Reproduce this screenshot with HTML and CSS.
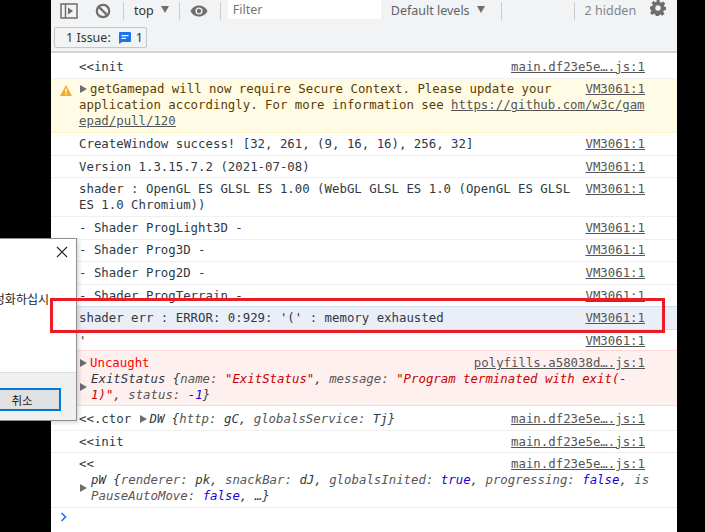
FILE: index.html
```html
<!DOCTYPE html>
<html lang="en">
<head>
  <meta charset="UTF-8" />
  <title>Console</title>
  <link rel="stylesheet" href="styles.css">
</head>
<body>
  <div class="panel">
    <div class="toolbar">
      <svg class="tool-icon sidebar-icon" width="18" height="16" viewBox="0 0 18 16"><path d="M1 1h16v14H1z M5.500 1v14" fill="none" stroke="#6e6e6e" stroke-width="1.500"/><path d="M8 4.500l5 3.500-5 3.500z" fill="#6e6e6e"/></svg>
      <svg class="tool-icon ban-icon" width="16" height="16" viewBox="0 0 16 16"><circle cx="8" cy="8" r="6.200" fill="none" stroke="#6e6e6e" stroke-width="2.200"/><path d="M3.600 3.600l8.800 8.800" stroke="#6e6e6e" stroke-width="2.200"/></svg>
      <span class="sep first-sep"></span>
      <span class="context">top</span>
      <span class="arrow"></span>
      <span class="sep context-sep"></span>
      <svg class="tool-icon eye-icon" width="18" height="12" viewBox="0 0 18 12"><path d="M9 0.500C5 0.500 1.800 3 0.500 6c1.300 3 4.500 5.500 8.500 5.500s7.200-2.500 8.500-5.500C16.200 3 13 0.500 9 0.500z" fill="#6e6e6e"/><circle cx="9" cy="6" r="3.600" fill="#f1f3f4"/><circle cx="9" cy="6" r="2.200" fill="#6e6e6e"/></svg>
      <span class="sep eye-sep"></span>
      <div class="filter">Filter</div>
      <span class="levels">Default levels</span>
      <span class="arrow"></span>
      <span class="sep levels-sep"></span>
      <span class="sep hidden-sep"></span>
      <span class="hidden-count">2 hidden</span>
      <svg class="gear-icon" width="16" height="16" viewBox="0 0 16 16"><path fill="#6e6e6e" fill-rule="evenodd" d="M6.500 0h3l.4 2.200 1.300.6L13.100 1.500l2.100 2.100-1.300 1.900.6 1.300 1.500.3v3l-2.200.4-.6 1.300 1.300 1.900-2.100 2.100-1.900-1.300-1.300.6-.4 1.500h-3l-.4-2.200-1.300-.6-1.900 1.300-2.100-2.100 1.300-1.900-.6-1.300L0 9.500v-3l2.200-.4.6-1.300L1.500 3l2.100-2.100 1.900 1.300 1.300-.6z M8 5.300a2.700 2.700 0 1 0 0 5.400 2.700 2.700 0 0 0 0-5.400z"/></svg>
    </div>
    <div class="issuebar">
      <button class="issue-button">
        1 Issue:
        <svg width="12" height="12" viewBox="0 0 12 12"><path d="M1 0h10a1 1 0 0 1 1 1v8a1 1 0 0 1-1 1H3l-3 2V1a1 1 0 0 1 1-1z" fill="#1a73e8"/><path d="M2.500 3h7v1.200h-7z M2.500 5.800h4.500V7h-4.500z" fill="#fff"/></svg>
        1
      </button>
    </div>

    <div class="messages">
      <div class="row"><a class="source">main.df23e5e….js:1</a>&lt;&lt;init</div>
      <div class="row warning">
        <svg class="warn-icon" width="12" height="11" viewBox="0 0 12 11"><path d="M6 0l6 11H0z" fill="#f2ab26"/><path d="M5.300 3.500h1.400v4H5.300z M5.300 8.300h1.400v1.300H5.300z" fill="#fff"/></svg>
        <a class="source">VM3061:1</a><span class="tri"></span>getGamepad will now require Secure Context. Please update your application accordingly. For more information see <a class="url">https://github.com/w3c/gam<wbr>epad/pull/120</a>
      </div>
      <div class="row"><a class="source">VM3061:1</a>CreateWindow success! [32, 261, (9, 16, 16), 256, 32]</div>
      <div class="row"><a class="source">VM3061:1</a>Version 1.3.15.7.2 (2021-07-08)</div>
      <div class="row"><a class="source">VM3061:1</a>shader : OpenGL ES GLSL ES 1.00 (WebGL GLSL ES 1.0 (OpenGL ES GLSL ES 1.0 Chromium))</div>
      <div class="row"><a class="source">VM3061:1</a>- Shader ProgLight3D -</div>
      <div class="row"><a class="source">VM3061:1</a>- Shader Prog3D -</div>
      <div class="row"><a class="source">VM3061:1</a>- Shader Prog2D -</div>
      <div class="row"><a class="source">VM3061:1</a>- Shader ProgTerrain -</div>
      <div class="row selected"><a class="source">VM3061:1</a>shader err : ERROR: 0:929: '(' : memory exhausted</div>
      <div class="row"><a class="source">VM3061:1</a>'</div>
      <div class="row error">
        <a class="source">polyfills.a58038d….js:1</a>
        <div class="uncaught"><span class="tri"></span>Uncaught</div>
        <div class="object">
          <span class="tri"></span>
          <div class="object-text">ExitStatus {<span class="key">name:</span> <span class="str">"ExitStatus"</span>, <span class="key">message:</span> <span class="str">"Program terminated with exit(-<br>1)"</span>, <span class="key">status:</span> <span class="num">-1</span>}</div>
        </div>
      </div>
      <div class="row ctor-row"><a class="source">main.df23e5e….js:1</a>&lt;&lt;.ctor <span class="tri"></span><em>DW {<span class="key">http:</span> gC, <span class="key">globalsService:</span> Tj}</em></div>
      <div class="row"><a class="source">main.df23e5e….js:1</a>&lt;&lt;init</div>
      <div class="row">
        <a class="source">main.df23e5e….js:1</a>
        <div>&lt;&lt;</div>
        <div class="object">
          <span class="tri"></span>
          <div class="object-text">pW {<span class="key">renderer:</span> pk, <span class="key">snackBar:</span> dJ, <span class="key">globalsInited:</span> <span class="num">true</span>, <span class="key">progressing:</span> <span class="num">false</span>, <span class="key">is<wbr>PauseAutoMove:</span> <span class="num">false</span>, …}</div>
        </div>
      </div>
      <div class="prompt">
        <svg width="8" height="10" viewBox="0 0 8 10"><path d="M1.500 1l4 4-4 4" fill="none" stroke="#1a73e8" stroke-width="1.600"/></svg>
      </div>
    </div>
  </div>

  <div class="dialog">
    <div class="dialog-head">
      <svg width="12" height="12" viewBox="0 0 12 12"><path d="M1 1l10 10M11 1L1 11" stroke="#222" stroke-width="1.100"/></svg>
    </div>
    <div class="dialog-body">오류를 확인하려면 기능을 활성화하십시</div>
    <div class="dialog-foot">
      <button class="cancel">취소</button>
    </div>
  </div>

  <div class="highlight"></div>
</body>
</html>
```

FILE: styles.css
```css
* {
  margin: 0;
  padding: 0;
  box-sizing: border-box;
}

html,
body {
  height: 100%;
  overflow: hidden;
}

body {
  background-color: #000;
  padding: 0 28px 0 51px;
  font-family: 'Noto Sans', sans-serif;
}

.panel {
  background-color: #fff;
  height: 100%;
}

.toolbar {
  height: 21px;
  background-color: #f1f3f4;
  display: flex;
  align-items: center;
  font-size: 12.5px;
  color: #5f6368;
  position: relative;
}

.tool-icon {
  flex-shrink: 0;
}

.sidebar-icon {
  margin-left: 9px;
}

.ban-icon {
  margin-left: 17px;
}

.sep {
  width: 1px;
  height: 18px;
  background-color: #ccc;
  flex-shrink: 0;
}

.first-sep {
  margin-left: 12px;
}

.context {
  margin-left: 10px;
  color: #333;
}

.arrow {
  width: 0;
  height: 0;
  border-left: 4px solid transparent;
  border-right: 4px solid transparent;
  border-top: 7px solid #6e6e6e;
  margin-left: 7px;
  margin-bottom: 3px;
}

.context-sep {
  margin-left: 10px;
}

.eye-icon {
  margin-left: 10px;
}

.eye-sep {
  margin-left: 12px;
}

.filter {
  width: 153px;
  height: 19px;
  margin-left: 7px;
  padding-left: 5px;
  background-color: #fff;
  color: #757575;
  line-height: 20px;
  align-self: flex-start;
}

.levels {
  margin-left: 10px;
}

.levels-sep {
  margin-left: 16px;
}

.hidden-sep {
  margin-left: 72px;
}

.hidden-count {
  margin-left: 10px;
  color: #80868b;
}

.gear-icon {
  margin-left: 14px;
  margin-bottom: 6px;
}

.issuebar {
  height: 32px;
  background-color: #f1f3f4;
  border-bottom: 2px solid #d3d5d6;
  padding: 6px 3px 0;
}

.issue-button {
  width: 93px;
  height: 21px;
  background-color: #f1f3f4;
  border: 1px solid #c4c6c8;
  border-radius: 2px;
  display: flex;
  align-items: center;
  gap: 8px;
  padding-left: 11px;
  font-family: 'Noto Sans', sans-serif;
  font-size: 12.5px;
  color: #333;
}

.issue-button svg {
  margin-right: -3px;
}

.messages {
  font-family: 'DejaVu Sans Mono', monospace;
  font-size: 12.37px;
  line-height: 16px;
  color: #303942;
  padding-top: 3px;
}

.row {
  position: relative;
  padding: 2.8px 32px 2.8px 28px;
  border-bottom: 1px solid #f0f0f0;
}

.source {
  float: right;
  margin-left: 14px;
  color: #555;
  text-decoration: underline;
}

.tri {
  display: inline-block;
  width: 0;
  height: 0;
  border-top: 4px solid transparent;
  border-bottom: 4px solid transparent;
  border-left: 7px solid #6e6e6e;
  margin: 0 3px 0 1px;
  flex-shrink: 0;
}

.warning {
  background-color: #fffbe5;
  border-bottom-color: #fff5c2;
  color: #5c3c00;
}

.warn-icon {
  position: absolute;
  left: 9px;
  top: 6px;
}

.url {
  color: #555;
  text-decoration: underline;
}

.selected {
  background-color: #e9eef7;
  border-top: 1px solid #cfe0f5;
  border-bottom: 1px solid #cfe0f5;
  margin-top: -1px;
}

.error {
  background-color: #fff0f0;
  border-top: 1px solid #ffd6d6;
  border-bottom: 1px solid #ffd6d6;
  margin-top: -3px;
  padding-top: 4.8px;
  padding-bottom: 1.8px;
  color: #c80000;
}

.ctor-row {
  padding-top: 4.8px;
}

.uncaught {
  color: #f00;
}

.object {
  display: flex;
  align-items: center;
  font-style: italic;
}

.object .tri {
  margin: 0 4px 0 1px;
}

.object-text {
  color: #303942;
  margin-right: -6px;
}

.key {
  color: #565656;
}

.str {
  color: #c80000;
}

.num {
  color: #1c00cf;
}

.prompt {
  padding: 2px 0 0 9px;
}

/* modal hanging off the left edge */
.dialog {
  position: absolute;
  left: -300px;
  top: 238px;
  width: 377px;
  height: 183px;
  background-color: #fff;
  border: 1px solid #8f8f8f;
  box-shadow: 2px 2px 4px rgba(0, 0, 0, 0.15);
  display: flex;
  flex-direction: column;
  font-family: 'Noto Sans CJK KR', sans-serif;
  color: #222;
}

.dialog-head {
  display: flex;
  justify-content: flex-end;
  padding: 7px 8px 0 0;
  height: 51px;
}

.dialog-body {
  font-size: 12px;
  line-height: 18px;
  text-align: right;
  padding-right: 27px;
  flex: 1;
}

.dialog-foot {
  height: 48px;
  background-color: #f0f0f0;
  border-top: 1px solid #dfdfdf;
  padding: 15px 15px 0 0;
  display: flex;
  justify-content: flex-end;
}

.cancel {
  width: 78px;
  height: 23px;
  background-color: #e1e1e1;
  border: 2px solid #0078d7;
  font-family: 'Noto Sans CJK KR', sans-serif;
  font-size: 11.5px;
  color: #222;
}

/* red annotation drawn over the screenshot */
.highlight {
  position: absolute;
  left: 50px;
  top: 298px;
  width: 615px;
  height: 35px;
  border: 3px solid #ed1c24;
}
```
